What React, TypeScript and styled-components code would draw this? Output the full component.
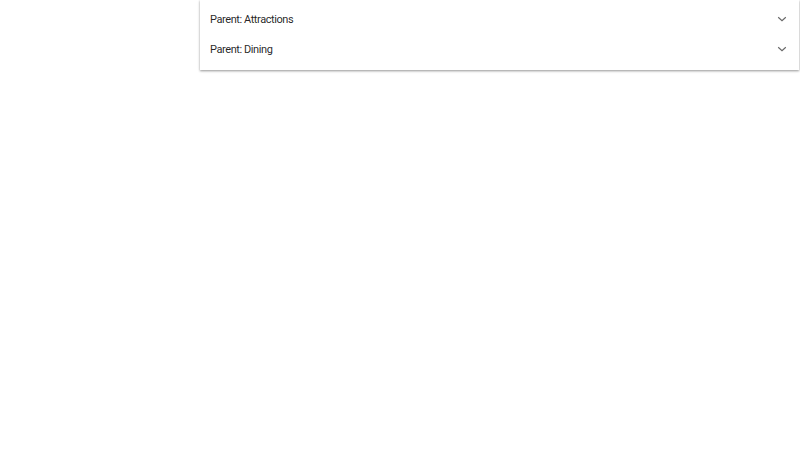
import React from "react";
import styled, { createGlobalStyle } from "styled-components";

const Global = createGlobalStyle`
  html, body { margin: 0; padding: 0; background: #fff; }
  body { font-family: Roboto, "Liberation Sans", sans-serif; }
`;

const Page = styled.div`
  width: 800px;
  height: 450px;
  display: flex;
  justify-content: flex-end;
  align-items: flex-start;
`;

const Card = styled.div`
  width: 599px;
  margin-right: 1px;
  padding: 4px 0 6px;
  background: #fff;
  box-shadow: 0 1px 2px rgba(0,0,0,0.3), 0 1px 3px rgba(0,0,0,0.15);
  display: flex;
  flex-direction: column;
`;

const Row = styled.div`
  height: 30px;
  display: flex;
  align-items: center;
  justify-content: space-between;
  padding: 0 10px 0 10px;
  font-size: 11px;
  letter-spacing: -0.42px;
  color: rgba(0,0,0,0.87);
`;

const Chevron = () => (
  <svg width="14" height="14" viewBox="0 0 24 24" fill="none" stroke="rgba(0,0,0,0.6)" strokeWidth="2">
    <path d="M5.5 9l6.5 6 6.5-6" />
  </svg>
);

const items = ["Parent: Attractions", "Parent: Dining"];

export default function App() {
  return (
    <>
      <Global />
      <Page>
        <Card>
          {items.map((t) => (
            <Row key={t}>
              <span>{t}</span>
              <Chevron />
            </Row>
          ))}
        </Card>
      </Page>
    </>
  );
}
